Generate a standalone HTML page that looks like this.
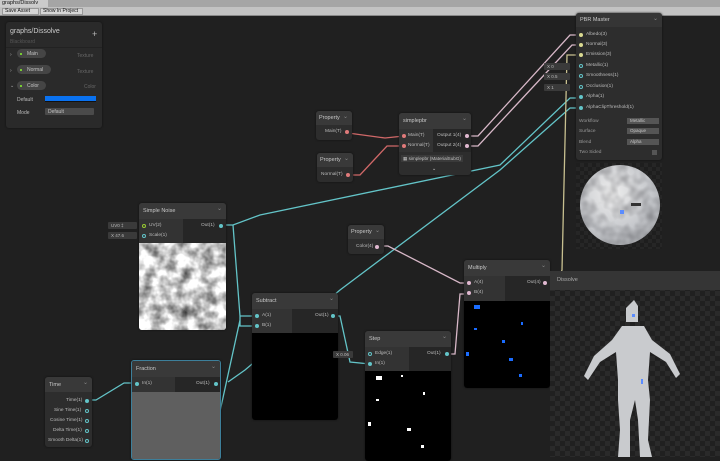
<!DOCTYPE html>
<html><head><meta charset="utf-8"><style>
*{box-sizing:border-box;margin:0;padding:0}
body{width:720px;height:457px;overflow:hidden;background:#202020;font-family:"Liberation Sans",sans-serif;font-size:5px;color:#c4c4c4;position:relative}
.abs{position:absolute}
.node{position:absolute;background:#2d2d2d;border-radius:3px;overflow:hidden;box-shadow:0 0 2px #111}
.hd{height:16px;background:#393939;padding:5px 4px;font-size:5.5px;color:#c8c8c8;position:relative}
.hd:after{content:"⌄";position:absolute;right:4px;top:2px;color:#888;font-size:6px}
.pl{position:absolute;font-size:4.8px;color:#bbb}
.dot{position:absolute;width:4px;height:4px;border-radius:50%}
.chip{position:absolute;background:#3a3a3a;color:#bbb;font-size:4.5px;padding:1px 3px;border-radius:1px}
svg{position:absolute;left:0;top:0}
</style></head><body>
<div class="abs" style="left:0;top:0;width:720px;height:7px;background:#a5a5a5"></div>
<div class="abs" style="left:0;top:0;width:48px;height:7px;background:#cbcbcb;font-size:5.5px;color:#111;padding-left:2px;line-height:7px">graphs/Dissolv</div>
<div class="abs" style="left:0;top:7px;width:720px;height:9px;background:#c2c2c2;border-bottom:1px solid #888"></div>
<div class="abs" style="left:2px;top:8px;width:37px;height:7px;background:#d6d6d6;border:1px solid #999;font-size:5px;color:#111;line-height:5px;padding-left:2px">Save Asset</div>
<div class="abs" style="left:40px;top:8px;width:43px;height:7px;background:#d6d6d6;border:1px solid #999;font-size:5px;color:#111;line-height:5px;padding-left:2px">Show In Project</div>

<svg width="720" height="457" fill="none" stroke-width="1.3">
<defs>
<filter id="n" x="0" y="0" width="100%" height="100%" color-interpolation-filters="sRGB"><feTurbulence type="fractalNoise" baseFrequency="0.08" numOctaves="3" seed="3"/><feColorMatrix type="matrix" values="1.3 0 0 0 0.12  1.3 0 0 0 0.12  1.3 0 0 0 0.12  0 0 0 0 1"/></filter>
<filter id="s" x="0" y="0" width="100%" height="100%" color-interpolation-filters="sRGB"><feTurbulence type="fractalNoise" baseFrequency="0.08" numOctaves="2" seed="7"/><feColorMatrix type="matrix" values="0 0 0 0 0.2  0 0 0 0 0.2  0 0 0 0 0.22  0.8 0 0 0 -0.3"/></filter>
</defs>
<g stroke="#63c4c8">
<path d="M214 225 L233 225 L260 215 L500 165 L570 98 L578 98"/>
<path d="M233 225 L240 316 L246 316 L256 316 M240 316 L240 326 L256 326 M240 320 L210 457"/>
<path d="M228 382 L245 370 L340 290 L500 170 L570 108 L578 108"/>
<path d="M88 400 L96 400 L124 383 L137 383"/>
<path d="M323 316 L340 316 L350 362 L370 364"/>
</g>
<g stroke="#d8b8c8">
<path d="M375 246 L388 246 L460 283 L468 283"/>
<path d="M436 354 L455 354 L460 294 L468 294"/>
<path d="M468 136 L478 136 L570 35 L578 35"/>
<path d="M468 146 L478 146 L572 45 L578 45"/>
</g>
<g stroke="#d06868">
<path d="M348 133 L385 138 L404 136"/>
<path d="M347 175 L360 175 L387 146 L404 146"/>
</g>
<path d="M578 55 L567 55 L562 270 L560 275" stroke="#c8c090"/>
</svg>

<div class="node" style="left:6px;top:22px;width:96px;height:106px;background:#2a2a2a">
 <div class="abs" style="left:4px;top:6px;font-size:7px;color:#ccc">graphs/Dissolve</div>
 <div class="abs" style="left:4px;top:17px;font-size:5px;color:#555">Blackboard</div>
 <div class="abs" style="left:86px;top:7px;font-size:9px;color:#bbb">+</div>
 <div class="abs" style="left:0;top:25px;width:96px;height:1px;background:#222"></div>
 <div class="abs" style="left:4px;top:30px;color:#aaa">›</div>
 <div class="abs" style="left:11px;top:27px;width:29px;height:9px;border-radius:5px;background:#454545;padding:2px 0 0 10px;font-size:5px">Main</div>
 <div class="abs" style="left:71px;top:31px;color:#666">Texture</div>
 <div class="abs" style="left:4px;top:46px;color:#aaa">›</div>
 <div class="abs" style="left:11px;top:43px;width:34px;height:9px;border-radius:5px;background:#454545;padding:2px 0 0 10px;font-size:5px">Normal</div>
 <div class="abs" style="left:71px;top:47px;color:#666">Texture</div>
 <div class="abs" style="left:4px;top:61px;color:#aaa">⌄</div>
 <div class="abs" style="left:11px;top:59px;width:29px;height:9px;border-radius:5px;background:#454545;padding:2px 0 0 10px;font-size:5px">Color</div>
 <div class="abs" style="left:78px;top:62px;color:#666">Color</div>
 <div class="abs" style="left:14px;top:31px;width:2px;height:2px;background:#7c3"></div>
 <div class="abs" style="left:14px;top:47px;width:2px;height:2px;background:#7c3"></div>
 <div class="abs" style="left:14px;top:63px;width:2px;height:2px;background:#7c3"></div>
 <div class="abs" style="left:11px;top:75px;color:#bbb">Default</div>
 <div class="abs" style="left:39px;top:74px;width:51px;height:6px;background:#0a72f0;border-bottom:1px solid #111"></div>
 <div class="abs" style="left:11px;top:88px;color:#bbb">Mode</div>
 <div class="abs" style="left:39px;top:86px;width:49px;height:7px;background:#4a4a4a;border-radius:1px;padding:1px 3px;font-size:5px">Default</div>
</div>

<div class="node" style="left:316px;top:111px;width:36px;height:29px"><div class="hd" style="height:14px;padding:4px 3px">Property</div><div class="pl" style="left:9px;top:18px">Main(T)</div><div class="dot" style="left:29px;top:19px;background:#e07a7a"></div></div>
<div class="node" style="left:317px;top:153px;width:36px;height:29px"><div class="hd" style="height:14px;padding:4px 3px">Property</div><div class="pl" style="left:4px;top:19px">Normal(T)</div><div class="dot" style="left:29px;top:20px;background:#e07a7a"></div></div>
<div class="node" style="left:348px;top:225px;width:36px;height:29px"><div class="hd" style="height:14px;padding:4px 3px">Property</div><div class="pl" style="left:8px;top:19px">Color(4)</div><div class="dot" style="left:27px;top:20px;background:#e0b8d0"></div></div>

<div class="node" style="left:399px;top:113px;width:72px;height:62px">
 <div class="hd">simplepbr</div>
 <div class="abs" style="left:0;top:16px;width:34px;height:23px;background:#333"></div>
 <div class="abs" style="left:34px;top:16px;width:38px;height:23px;background:#262626"></div>
 <div class="dot" style="left:3px;top:21px;background:#e07a7a"></div><div class="pl" style="left:9px;top:20px">Main(T)</div>
 <div class="dot" style="left:3px;top:31px;background:#e07a7a"></div><div class="pl" style="left:9px;top:30px">Normal(T)</div>
 <div class="pl" style="left:38px;top:20px">Output 1(4)</div><div class="dot" style="left:66px;top:21px;background:#e0b8d0"></div>
 <div class="pl" style="left:38px;top:30px">Output 2(4)</div><div class="dot" style="left:66px;top:31px;background:#e0b8d0"></div>
 <div class="abs" style="left:2px;top:42px;width:62px;height:7px;background:#3a3a3a;padding:1px 2px;font-size:4.6px">▦ simplepbr (MaterialSubG)</div>
 <div class="abs" style="left:33px;top:53px;color:#ccc">⌄</div>
</div>

<div class="node" style="left:576px;top:13px;width:86px;height:147px">
 <div class="hd" style="height:14px;padding:4px 4px;background:#353535">PBR Master</div>
 <div class="dot" style="left:3px;top:20px;background:#d8d890"></div><div class="pl" style="left:10px;top:19px">Albedo(3)</div>
 <div class="dot" style="left:3px;top:30px;background:#d8d890"></div><div class="pl" style="left:10px;top:29px">Normal(3)</div>
 <div class="dot" style="left:3px;top:40px;background:#d8d890"></div><div class="pl" style="left:10px;top:39px">Emission(3)</div>
 <div class="dot" style="left:3px;top:51px;border:1px solid #63c4c8"></div><div class="pl" style="left:10px;top:50px">Metallic(1)</div>
 <div class="dot" style="left:3px;top:61px;border:1px solid #63c4c8"></div><div class="pl" style="left:10px;top:60px">Smoothness(1)</div>
 <div class="dot" style="left:3px;top:72px;border:1px solid #63c4c8"></div><div class="pl" style="left:10px;top:71px">Occlusion(1)</div>
 <div class="dot" style="left:3px;top:82px;background:#63c4c8"></div><div class="pl" style="left:10px;top:81px">Alpha(1)</div>
 <div class="dot" style="left:3px;top:93px;background:#63c4c8"></div><div class="pl" style="left:10px;top:92px">AlphaClipThreshold(1)</div>
 <div class="pl" style="left:3px;top:106px;color:#999">Workflow</div><div class="abs" style="left:51px;top:105px;width:32px;height:6px;background:#555;font-size:4.5px;padding-left:3px">Metallic</div>
 <div class="pl" style="left:3px;top:116px;color:#999">Surface</div><div class="abs" style="left:51px;top:115px;width:32px;height:6px;background:#555;font-size:4.5px;padding-left:3px">Opaque</div>
 <div class="pl" style="left:3px;top:127px;color:#999">Blend</div><div class="abs" style="left:51px;top:126px;width:32px;height:6px;background:#555;font-size:4.5px;padding-left:3px">Alpha</div>
 <div class="pl" style="left:3px;top:137px;color:#999">Two Sided</div><div class="abs" style="left:76px;top:137px;width:5px;height:5px;background:#555"></div>
</div>
<div class="chip" style="left:544px;top:63px;width:26px">X 0</div>
<div class="chip" style="left:544px;top:73px;width:26px">X 0.5</div>
<div class="chip" style="left:544px;top:84px;width:26px">X 1</div>

<div class="abs" style="left:576px;top:163px;width:86px;height:86px;background:repeating-conic-gradient(#262626 0 25%,#1e1e1e 0 50%) 0 0/8px 8px"></div>
<div class="abs" style="left:580px;top:165px;width:80px;height:80px;border-radius:50%;background:radial-gradient(circle at 40% 35%,#eeeeee,#c6c8cc 55%,#8a8c90);overflow:hidden">
 <svg width="80" height="80"><rect width="80" height="80" filter="url(#s)"/></svg>
</div>
<div class="abs" style="left:620px;top:210px;width:4px;height:4px;background:#5b8cff"></div>
<div class="abs" style="left:631px;top:203px;width:10px;height:3px;background:#333"></div>

<div class="node" style="left:139px;top:203px;width:87px;height:127px">
 <div class="hd">Simple Noise</div>
 <div class="abs" style="left:0;top:16px;width:44px;height:24px;background:#333"></div>
 <div class="abs" style="left:44px;top:16px;width:43px;height:24px;background:#262626"></div>
 <div class="dot" style="left:3px;top:21px;border:1px solid #9c3"></div><div class="pl" style="left:10px;top:20px">UV(2)</div>
 <div class="dot" style="left:3px;top:31px;border:1px solid #63c4c8"></div><div class="pl" style="left:10px;top:30px">Scale(1)</div>
 <div class="pl" style="left:62px;top:20px">Out(1)</div><div class="dot" style="left:80px;top:21px;background:#63c4c8"></div>
 <div class="abs" style="left:0;top:40px;width:87px;height:87px;background:#bbb">
  <svg width="87" height="87"><rect width="87" height="87" filter="url(#n)"/></svg>
 </div>
</div>
<div class="chip" style="left:108px;top:222px;width:29px">UV0 ‡</div>
<div class="chip" style="left:108px;top:232px;width:29px">X 47.6</div>

<div class="node" style="left:252px;top:293px;width:86px;height:127px">
 <div class="hd">Subtract</div>
 <div class="abs" style="left:0;top:16px;width:40px;height:24px;background:#333"></div>
 <div class="abs" style="left:40px;top:16px;width:46px;height:24px;background:#262626"></div>
 <div class="dot" style="left:3px;top:21px;background:#63c4c8"></div><div class="pl" style="left:10px;top:20px">A(1)</div>
 <div class="dot" style="left:3px;top:31px;background:#63c4c8"></div><div class="pl" style="left:10px;top:30px">B(1)</div>
 <div class="pl" style="left:63px;top:20px">Out(1)</div><div class="dot" style="left:79px;top:21px;background:#63c4c8"></div>
 <div class="abs" style="left:0;top:40px;width:86px;height:87px;background:#000"></div>
</div>

<div class="node" style="left:464px;top:260px;width:86px;height:128px">
 <div class="hd">Multiply</div>
 <div class="abs" style="left:0;top:16px;width:41px;height:25px;background:#333"></div>
 <div class="abs" style="left:41px;top:16px;width:45px;height:25px;background:#262626"></div>
 <div class="dot" style="left:3px;top:21px;background:#e0b8d0"></div><div class="pl" style="left:10px;top:20px">A(4)</div>
 <div class="dot" style="left:3px;top:31px;background:#e0b8d0"></div><div class="pl" style="left:10px;top:30px">B(4)</div>
 <div class="pl" style="left:63px;top:20px">Out(4)</div><div class="dot" style="left:79px;top:21px;background:#e0b8d0"></div>
 <div class="abs" style="left:0;top:41px;width:86px;height:87px;background:#000"></div>
 <div class="abs" style="left:10px;top:45px;width:6px;height:4px;background:#1a6cff"></div>
 <div class="abs" style="left:10px;top:68px;width:3px;height:2px;background:#1a6cff"></div>
 <div class="abs" style="left:38px;top:80px;width:3px;height:3px;background:#1a6cff"></div>
 <div class="abs" style="left:57px;top:62px;width:2px;height:3px;background:#1a6cff"></div>
 <div class="abs" style="left:2px;top:92px;width:3px;height:4px;background:#1a6cff"></div>
 <div class="abs" style="left:45px;top:98px;width:4px;height:3px;background:#1a6cff"></div>
 <div class="abs" style="left:55px;top:114px;width:3px;height:3px;background:#1a6cff"></div>
</div>

<div class="node" style="left:365px;top:331px;width:86px;height:130px">
 <div class="hd">Step</div>
 <div class="abs" style="left:0;top:16px;width:44px;height:24px;background:#333"></div>
 <div class="abs" style="left:44px;top:16px;width:42px;height:24px;background:#262626"></div>
 <div class="dot" style="left:3px;top:21px;border:1px solid #63c4c8"></div><div class="pl" style="left:10px;top:20px">Edge(1)</div>
 <div class="dot" style="left:3px;top:31px;background:#63c4c8"></div><div class="pl" style="left:10px;top:30px">In(1)</div>
 <div class="pl" style="left:62px;top:20px">Out(1)</div><div class="dot" style="left:80px;top:21px;background:#63c4c8"></div>
 <div class="abs" style="left:0;top:40px;width:86px;height:90px;background:#000"></div>
 <div class="abs" style="left:11px;top:45px;width:6px;height:4px;background:#fff"></div>
 <div class="abs" style="left:11px;top:68px;width:3px;height:2px;background:#fff"></div>
 <div class="abs" style="left:36px;top:44px;width:2px;height:2px;background:#fff"></div>
 <div class="abs" style="left:58px;top:61px;width:2px;height:3px;background:#fff"></div>
 <div class="abs" style="left:3px;top:91px;width:3px;height:4px;background:#fff"></div>
 <div class="abs" style="left:42px;top:97px;width:4px;height:3px;background:#fff"></div>
 <div class="abs" style="left:56px;top:114px;width:3px;height:3px;background:#fff"></div>
</div>
<div class="chip" style="left:333px;top:351px;width:20px">X 0.06</div>

<div class="node" style="left:131px;top:360px;width:90px;height:100px;border:1px solid #3d7f9a">
 <div class="hd">Fraction</div>
 <div class="abs" style="left:0;top:16px;width:43px;height:15px;background:#333"></div>
 <div class="abs" style="left:43px;top:16px;width:47px;height:15px;background:#262626"></div>
 <div class="dot" style="left:3px;top:21px;background:#63c4c8"></div><div class="pl" style="left:10px;top:20px">In(1)</div>
 <div class="pl" style="left:64px;top:20px">Out(1)</div><div class="dot" style="left:82px;top:21px;background:#63c4c8"></div>
 <div class="abs" style="left:0;top:31px;width:90px;height:70px;background:#5f5f5f"></div>
</div>

<div class="node" style="left:45px;top:377px;width:47px;height:70px">
 <div class="hd" style="height:15px">Time</div>
 <div class="pl" style="left:21px;top:21px">Time(1)</div><div class="dot" style="left:40px;top:22px;background:#63c4c8"></div>
 <div class="pl" style="left:9px;top:31px">Sine Time(1)</div><div class="dot" style="left:40px;top:32px;border:1px solid #63c4c8"></div>
 <div class="pl" style="left:5px;top:41px">Cosine Time(1)</div><div class="dot" style="left:40px;top:42px;border:1px solid #63c4c8"></div>
 <div class="pl" style="left:8px;top:51px">Delta Time(1)</div><div class="dot" style="left:40px;top:52px;border:1px solid #63c4c8"></div>
 <div class="pl" style="left:3px;top:61px">Smooth Delta(1)</div><div class="dot" style="left:40px;top:62px;border:1px solid #63c4c8"></div>
</div>

<div class="abs" style="left:550px;top:271px;width:170px;height:186px;background:repeating-conic-gradient(#2a2a2a 0 25%,#202020 0 50%) 0 0/10px 10px"></div>
<div class="abs" style="left:550px;top:271px;width:170px;height:19px;background:#353535;padding:6px 7px;font-size:5.5px;color:#aaa">Dissolve</div>
<svg width="720" height="457" style="pointer-events:none">
<g fill="#c9cbce">
<path d="M630 304 L634 300 L638 306 L638 322 L626 322 L626 308 Z"/>
<path d="M622 326 L644 326 L652 340 L670 354 L680 374 L676 378 L666 362 L650 352 L648 380 L650 400 L648 440 L652 457 L640 457 L638 420 L635 400 L630 420 L630 457 L618 457 L620 430 L618 400 L618 380 L616 352 L600 362 L588 380 L584 376 L594 356 L612 340 Z"/>
</g>
<rect x="632" y="314" width="3" height="3" fill="#5b8cff"/>
<rect x="641" y="379" width="2" height="5" fill="#5b8cff"/>
</svg>
</body></html>
